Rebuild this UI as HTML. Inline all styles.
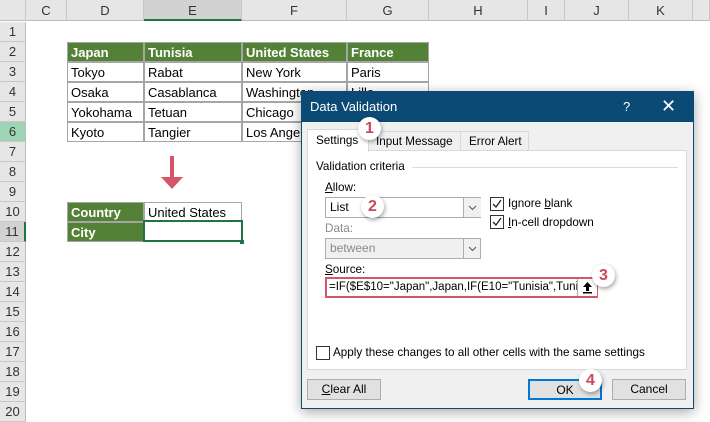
<html><head><style>
body{margin:0;width:710px;height:420px;overflow:hidden;background:#fff;font-family:"Liberation Sans",sans-serif;position:relative}
.a{position:absolute}
.ch{position:absolute;top:0;height:21px;background:#e6e6e6;border-right:1px solid #c8c8c8;border-bottom:1px solid #bdbdbd;box-sizing:border-box;text-align:center;font-size:13px;line-height:22px;color:#333}
.rh{position:absolute;left:0;width:26px;height:20px;background:#e6e6e6;border-bottom:1px solid #c8c8c8;border-right:1px solid #bdbdbd;box-sizing:border-box;text-align:center;font-size:13px;line-height:20px;color:#333}
.c{position:absolute;height:20px;box-sizing:border-box;font-size:13px;line-height:20px;padding-left:3px;border:1px solid #a6a6a6;margin:-1px 0 0 -1px;white-space:nowrap;overflow:hidden}
.g{background:#538135;color:#fff;font-weight:bold}
.n{position:absolute;width:23px;height:23px;border-radius:50%;background:#fff;box-shadow:1px 2px 4px rgba(0,0,0,.35);color:#c9485b;font-weight:bold;font-size:16px;text-align:center;line-height:23px}
.t{position:absolute;font-size:11.7px;color:#000;white-space:nowrap}
.btn{position:absolute;height:21px;background:#e1e1e1;border:1px solid #adadad;box-sizing:border-box;font-size:12px;text-align:center;line-height:19px}
.cb{position:absolute;width:12px;height:12px;border:1px solid #333;background:#fff}
.dd{position:absolute;width:17px;height:19px;border-left:1px solid #adadad}
</style></head><body>
<div class="ch" style="left:0;width:26px"></div>
<div class="ch" style="left:26px;width:41px">C</div>
<div class="ch" style="left:67px;width:77px">D</div>
<div class="ch" style="left:144px;width:98px;background:#d2d2d2;border-bottom:2px solid #217346">E</div>
<div class="ch" style="left:242px;width:105px">F</div>
<div class="ch" style="left:347px;width:82px">G</div>
<div class="ch" style="left:429px;width:99px">H</div>
<div class="ch" style="left:528px;width:37px">I</div>
<div class="ch" style="left:565px;width:64px">J</div>
<div class="ch" style="left:629px;width:64px">K</div>
<div class="ch" style="left:693px;width:17px"></div>
<div class="rh" style="top:22px">1</div><div class="rh" style="top:42px">2</div><div class="rh" style="top:62px">3</div><div class="rh" style="top:82px">4</div><div class="rh" style="top:102px">5</div><div class="rh" style="top:122px;background:#9fd5b7">6</div><div class="rh" style="top:142px">7</div><div class="rh" style="top:162px">8</div><div class="rh" style="top:182px">9</div><div class="rh" style="top:202px">10</div><div class="rh" style="top:222px;background:#d2d2d2;border-right:2px solid #217346">11</div><div class="rh" style="top:242px">12</div><div class="rh" style="top:262px">13</div><div class="rh" style="top:282px">14</div><div class="rh" style="top:302px">15</div><div class="rh" style="top:322px">16</div><div class="rh" style="top:342px">17</div><div class="rh" style="top:362px">18</div><div class="rh" style="top:382px">19</div><div class="rh" style="top:402px">20</div>

<div class="c g" style="left:68px;top:43px;width:77px">Japan</div>
<div class="c g" style="left:145px;top:43px;width:98px">Tunisia</div>
<div class="c g" style="left:243px;top:43px;width:105px">United States</div>
<div class="c g" style="left:348px;top:43px;width:82px">France</div>
<div class="c" style="left:68px;top:63px;width:77px">Tokyo</div><div class="c" style="left:145px;top:63px;width:98px">Rabat</div><div class="c" style="left:243px;top:63px;width:105px">New York</div><div class="c" style="left:348px;top:63px;width:82px">Paris</div>
<div class="c" style="left:68px;top:83px;width:77px">Osaka</div><div class="c" style="left:145px;top:83px;width:98px">Casablanca</div><div class="c" style="left:243px;top:83px;width:105px">Washington</div><div class="c" style="left:348px;top:83px;width:82px">Lille</div>
<div class="c" style="left:68px;top:103px;width:77px">Yokohama</div><div class="c" style="left:145px;top:103px;width:98px">Tetuan</div><div class="c" style="left:243px;top:103px;width:105px">Chicago</div><div class="c" style="left:348px;top:103px;width:82px"></div>
<div class="c" style="left:68px;top:123px;width:77px">Kyoto</div><div class="c" style="left:145px;top:123px;width:98px">Tangier</div><div class="c" style="left:243px;top:123px;width:105px">Los Angeles</div><div class="c" style="left:348px;top:123px;width:82px"></div>
<svg class="a" style="left:158px;top:155px" width="28" height="36"><rect x="12" y="1" width="4" height="22" fill="#d5566b"/><path d="M3 22 L25 22 L14 34 Z" fill="#d5566b"/></svg>
<div class="c g" style="left:68px;top:203px;width:77px">Country</div><div class="c" style="left:145px;top:203px;width:98px">United States</div>
<div class="c g" style="left:68px;top:223px;width:77px">City</div>
<div class="a" style="left:143px;top:220px;width:100px;height:22px;border:2px solid #217346;box-sizing:border-box"></div>
<div class="a" style="left:240px;top:240px;width:4px;height:4px;background:#217346"></div>

<div class="a" style="left:301px;top:91px;width:393px;height:318px;background:#f0f0f0;border:1px solid #0b4a74;box-sizing:border-box;box-shadow:0 3px 12px rgba(0,0,0,.35)"></div>
<div class="a" style="left:301px;top:91px;width:393px;height:31px;background:#0b4a74;color:#fff;font-size:13px;line-height:31px;padding-left:9px;box-sizing:border-box">Data Validation<span style="position:absolute;left:322px">?</span><span style="position:absolute;left:360px;font-size:18px">✕</span></div>
<div class="a" style="left:307px;top:150px;width:380px;height:220px;background:#fff;border:1px solid #d9d9d9;box-sizing:border-box"></div>
<div class="a" style="left:368px;top:131px;width:93px;height:20px;background:#f0f0f0;border:1px solid #d9d9d9;box-sizing:border-box"></div>
<div class="a" style="left:460px;top:131px;width:69px;height:20px;background:#f0f0f0;border:1px solid #d9d9d9;box-sizing:border-box"></div>
<div class="a" style="left:307px;top:129px;width:62px;height:23px;background:#fff;border:1px solid #d9d9d9;border-bottom:none;box-sizing:border-box"></div>
<div class="t" style="left:316px;top:134px">Settings</div>
<div class="t" style="left:376px;top:135px">Input Message</div>
<div class="t" style="left:469px;top:135px">Error Alert</div>
<div class="t" style="left:316px;top:160px">Validation criteria</div>
<div class="a" style="left:412px;top:167px;width:266px;height:1px;background:#dcdcdc"></div>
<div class="t" style="left:325px;top:181px"><u>A</u>llow:</div>
<div class="a" style="left:325px;top:197px;width:156px;height:21px;background:#fff;border:1px solid #adadad;box-sizing:border-box;font-size:12px;line-height:19px;padding-left:4px">List</div>
<div class="dd" style="left:463px;top:198px;background:#f0f0f0"><svg width="17" height="19"><path d="M5 8 L8.5 11.5 L12 8" stroke="#555" fill="none"/></svg></div>
<div class="t" style="left:325px;top:222px;color:#8a8a8a">Data:</div>
<div class="a" style="left:325px;top:238px;width:156px;height:21px;background:#f0f0f0;border:1px solid #adadad;box-sizing:border-box;font-size:12px;line-height:19px;padding-left:4px;color:#8a8a8a">between</div>
<div class="dd" style="left:463px;top:239px"><svg width="17" height="19"><path d="M5 8 L8.5 11.5 L12 8" stroke="#555" fill="none"/></svg></div>
<div class="cb" style="left:490px;top:197px"><svg width="12" height="12"><path d="M2 6 L5 9 L10 2" stroke="#222" fill="none" stroke-width="1.3"/></svg></div><div class="t" style="left:508px;top:197px">Ignore <u>b</u>lank</div>
<div class="cb" style="left:490px;top:215px"><svg width="12" height="12"><path d="M2 6 L5 9 L10 2" stroke="#222" fill="none" stroke-width="1.3"/></svg></div><div class="t" style="left:508px;top:216px"><u>I</u>n-cell dropdown</div>
<div class="t" style="left:325px;top:263px"><u>S</u>ource:</div>
<div class="a" style="left:325px;top:277px;width:273px;height:21px;background:#fff;border:2px solid #d5566b;box-sizing:border-box;font-size:11.5px;line-height:17px;padding-left:2px;overflow:hidden;white-space:nowrap">=IF($E$10="Japan",Japan,IF(E10="Tunisia",Tunisia</div>
<div class="a" style="left:577px;top:279px;width:19px;height:17px;background:#fff;border-left:1px solid #adadad"><svg width="19" height="17"><path d="M9.5 3 L5 8 H8 V12 H11 V8 H14 Z" fill="#000"/><rect x="5" y="13" width="9" height="1.5"/></svg></div>
<div class="cb" style="left:316px;top:346px"></div><div class="t" style="left:333px;top:346px">Apply these changes to all other cells with the same settings</div>
<div class="btn" style="left:307px;top:379px;width:74px"><u>C</u>lear All</div>
<div class="btn" style="left:528px;top:379px;width:74px;border:2px solid #0078d7">OK</div>
<div class="btn" style="left:612px;top:379px;width:74px">Cancel</div>
<div class="n" style="left:358px;top:117px">1</div>
<div class="n" style="left:361px;top:195px">2</div>
<div class="n" style="left:592px;top:264px">3</div>
<div class="n" style="left:579px;top:369px">4</div>
</body></html>
